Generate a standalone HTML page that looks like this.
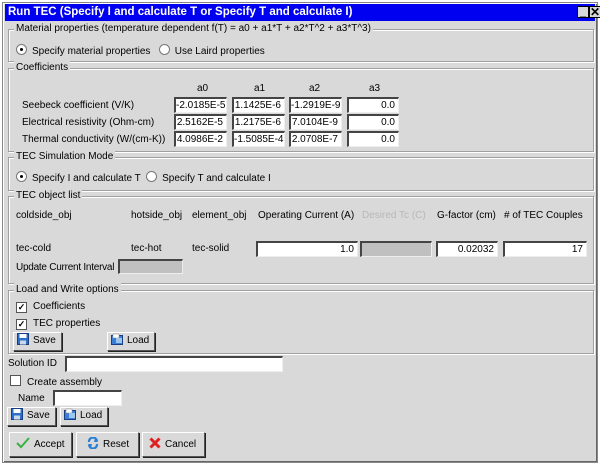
<!DOCTYPE html>
<html><head><style>
body{margin:0;width:600px;height:465px;background:#fff;position:relative;overflow:hidden;font-family:"Liberation Sans",sans-serif;font-size:10px;color:#000}
.win{position:absolute;left:2px;top:2px;width:594px;height:459px;background:#d9d9d9;border:1px solid #888;box-shadow:inset 1px 1px 0 #fff,inset -1px -1px 0 #666}
.title{position:absolute;left:5px;top:4px;width:590px;height:17px;background:#0000f0;color:#fff;font-weight:bold;font-size:11.5px;line-height:17px;text-indent:3px}
.tb{position:absolute;top:6px;width:12px;height:12px;background:#d9d9d9;border:1px solid #000;box-sizing:border-box;font-size:11px;line-height:10px;text-align:center;color:#000;font-weight:bold}
.a{position:absolute;white-space:nowrap}
.g{position:absolute;border:1px solid #a0a0a0;box-shadow:1px 1px 0 #fff inset,1px 1px 0 #fff}
.gl{position:absolute;background:#d9d9d9;padding:0 2px;white-space:nowrap;top:-8px;left:5px;line-height:14px}
.in{position:absolute;background:#fff;border-top:2px solid #444;border-left:2px solid #444;border-bottom:1px solid #eee;border-right:1px solid #eee;box-sizing:border-box;text-align:right;padding-right:3px;line-height:13px;font-size:10px;white-space:nowrap;overflow:hidden}
.gr{background:#c0c0c0}
.rd{display:inline-block;width:9px;height:9px;border-radius:50%;background:#fff;border:1px solid #777;vertical-align:-1px;margin-right:5px;position:relative}
.rd.on::after{content:"";position:absolute;left:3px;top:3px;width:3px;height:3px;border-radius:50%;background:#000}
.cb{display:inline-block;width:9px;height:9px;background:#fff;border:1px solid #555;vertical-align:-1px;margin-right:6px;font-size:9px;line-height:9px;text-align:center;font-weight:bold}
.btn{position:absolute;background:#d9d9d9;border:1px solid;border-color:#fff #555 #555 #fff;box-shadow:1px 1px 0 #222;box-sizing:border-box;line-height:16px;padding-left:3px;white-space:nowrap}
.ic{display:inline-block;width:12px;height:12px;vertical-align:-2px;margin-right:4px}
.dis{color:#b8b8b8}
</style></head><body>
<div class="win"></div>
<div class="title">Run TEC (Specify I and calculate T or Specify T and calculate I)</div>
<div class="tb" style="left:577px">_</div><div class="tb" style="left:589px;font-size:12px">✕</div>

<div class="g" style="left:8px;top:29px;width:584px;height:31px"><span class="gl">Material properties (temperature dependent f(T) = a0 + a1*T + a2*T^2 + a3*T^3)</span></div>
<div class="a" style="left:16px;top:44px"><span class="rd on"></span>Specify material properties &nbsp; <span class="rd"></span>Use Laird properties</div>

<div class="g" style="left:8px;top:68px;width:584px;height:82px"><span class="gl">Coefficients</span></div>
<div class="a" style="left:197px;top:83px">a0</div>
<div class="a" style="left:254px;top:83px">a1</div>
<div class="a" style="left:309px;top:83px">a2</div>
<div class="a" style="left:369px;top:83px">a3</div>
<div class="a" style="left:22px;top:100px">Seebeck coefficient (V/K)</div>
<div class="a" style="left:22px;top:117px">Electrical resistivity (Ohm-cm)</div>
<div class="a" style="left:22px;top:134px">Thermal conductivity (W/(cm-K))</div>
<div class="in" style="left:174px;top:97px;width:53px;height:16px">-2.0185E-5</div>
<div class="in" style="left:232px;top:97px;width:53px;height:16px">1.1425E-6</div>
<div class="in" style="left:289px;top:97px;width:53px;height:16px">-1.2919E-9</div>
<div class="in" style="left:347px;top:97px;width:52px;height:16px">0.0</div>
<div class="in" style="left:174px;top:114px;width:53px;height:16px">2.5162E-5</div>
<div class="in" style="left:232px;top:114px;width:53px;height:16px">1.2175E-6</div>
<div class="in" style="left:289px;top:114px;width:53px;height:16px">7.0104E-9</div>
<div class="in" style="left:347px;top:114px;width:52px;height:16px">0.0</div>
<div class="in" style="left:174px;top:131px;width:53px;height:16px">4.0986E-2</div>
<div class="in" style="left:232px;top:131px;width:53px;height:16px">-1.5085E-4</div>
<div class="in" style="left:289px;top:131px;width:53px;height:16px">2.0708E-7</div>
<div class="in" style="left:347px;top:131px;width:52px;height:16px">0.0</div>

<div class="g" style="left:8px;top:157px;width:584px;height:32px"><span class="gl">TEC Simulation Mode</span></div>
<div class="a" style="left:16px;top:171px"><span class="rd on"></span>Specify I and calculate T &nbsp;<span class="rd"></span>Specify T and calculate I</div>

<div class="g" style="left:8px;top:196px;width:584px;height:86px"><span class="gl">TEC object list</span></div>
<div class="a" style="left:16px;top:210px">coldside_obj</div>
<div class="a" style="left:131px;top:210px">hotside_obj</div>
<div class="a" style="left:192px;top:210px">element_obj</div>
<div class="a" style="left:258px;top:210px">Operating Current (A)</div>
<div class="a dis" style="left:362px;top:210px">Desired Tc (C)</div>
<div class="a" style="left:437px;top:210px">G-factor (cm)</div>
<div class="a" style="left:504px;top:210px"># of TEC Couples</div>
<div class="a" style="left:16px;top:243px">tec-cold</div>
<div class="a" style="left:131px;top:243px">tec-hot</div>
<div class="a" style="left:192px;top:243px">tec-solid</div>
<div class="in" style="left:256px;top:241px;width:102px;height:16px">1.0</div>
<div class="in gr" style="left:360px;top:241px;width:72px;height:16px"></div>
<div class="in" style="left:436px;top:241px;width:62px;height:16px">0.02032</div>
<div class="in" style="left:503px;top:241px;width:84px;height:16px">17</div>
<div class="a" style="left:16px;top:262px;letter-spacing:-0.25px">Update Current Interval</div>
<div class="in gr" style="left:118px;top:259px;width:65px;height:15px"></div>

<div class="g" style="left:8px;top:290px;width:584px;height:62px"><span class="gl">Load and Write options</span></div>
<div class="a" style="left:16px;top:301px"><span class="cb">✓</span>Coefficients</div>
<div class="a" style="left:16px;top:318px"><span class="cb">✓</span>TEC properties</div>
<div class="btn" style="left:13px;top:332px;width:49px;height:19px"><svg class="ic" viewBox="0 0 12 12"><rect x="0.5" y="0.5" width="11" height="11" fill="#2a6fc9" stroke="#1a3f80"/><rect x="2.5" y="1" width="7" height="4" fill="#fff"/><rect x="3" y="7.5" width="6" height="4" fill="#cfd8e6"/></svg>Save</div>
<div class="btn" style="left:107px;top:332px;width:48px;height:19px"><svg class="ic" viewBox="0 0 12 12"><rect x="0.5" y="2.5" width="11" height="9" fill="#3b7fd6" stroke="#1a3f80"/><rect x="2" y="1" width="6" height="4" fill="#fff" stroke="#888" stroke-width=".5"/><rect x="5" y="5" width="6" height="5" fill="#9cc6f0"/></svg>Load</div>

<div class="a" style="left:8px;top:358px">Solution ID</div>
<div class="in" style="left:65px;top:356px;width:218px;height:16px"></div>
<div class="a" style="left:10px;top:375px"><span class="cb"></span>Create assembly</div>
<div class="a" style="left:18px;top:393px">Name</div>
<div class="in" style="left:53px;top:390px;width:69px;height:16px"></div>
<div class="btn" style="left:7px;top:407px;width:49px;height:19px"><svg class="ic" viewBox="0 0 12 12"><rect x="0.5" y="0.5" width="11" height="11" fill="#2a6fc9" stroke="#1a3f80"/><rect x="2.5" y="1" width="7" height="4" fill="#fff"/><rect x="3" y="7.5" width="6" height="4" fill="#cfd8e6"/></svg>Save</div>
<div class="btn" style="left:60px;top:407px;width:48px;height:19px"><svg class="ic" viewBox="0 0 12 12"><rect x="0.5" y="2.5" width="11" height="9" fill="#3b7fd6" stroke="#1a3f80"/><rect x="2" y="1" width="6" height="4" fill="#fff" stroke="#888" stroke-width=".5"/><rect x="5" y="5" width="6" height="5" fill="#9cc6f0"/></svg>Load</div>

<div class="btn" style="left:9px;top:432px;width:63px;height:25px;line-height:23px;padding-left:6px"><svg class="ic" viewBox="0 0 14 12" style="width:14px"><path d="M1 6 L5 10 L13 1" fill="none" stroke="#3cb043" stroke-width="2"/></svg>Accept</div>
<div class="btn" style="left:76px;top:432px;width:63px;height:25px;line-height:23px;padding-left:10px"><svg class="ic" viewBox="0 0 12 12"><path d="M2 5 A4 4 0 0 1 10 4 M10 7 A4 4 0 0 1 2 8" fill="none" stroke="#2a7fd6" stroke-width="2.2"/><path d="M8 1 L11 5 L7 5Z M4 11 L1 7 L5 7Z" fill="#2a7fd6"/></svg>Reset</div>
<div class="btn" style="left:142px;top:432px;width:63px;height:25px;line-height:23px;padding-left:6px"><svg class="ic" viewBox="0 0 12 12"><path d="M1.5 1.5 L10.5 10.5 M10.5 1.5 L1.5 10.5" stroke="#e02020" stroke-width="3"/></svg>Cancel</div>
</body></html>
